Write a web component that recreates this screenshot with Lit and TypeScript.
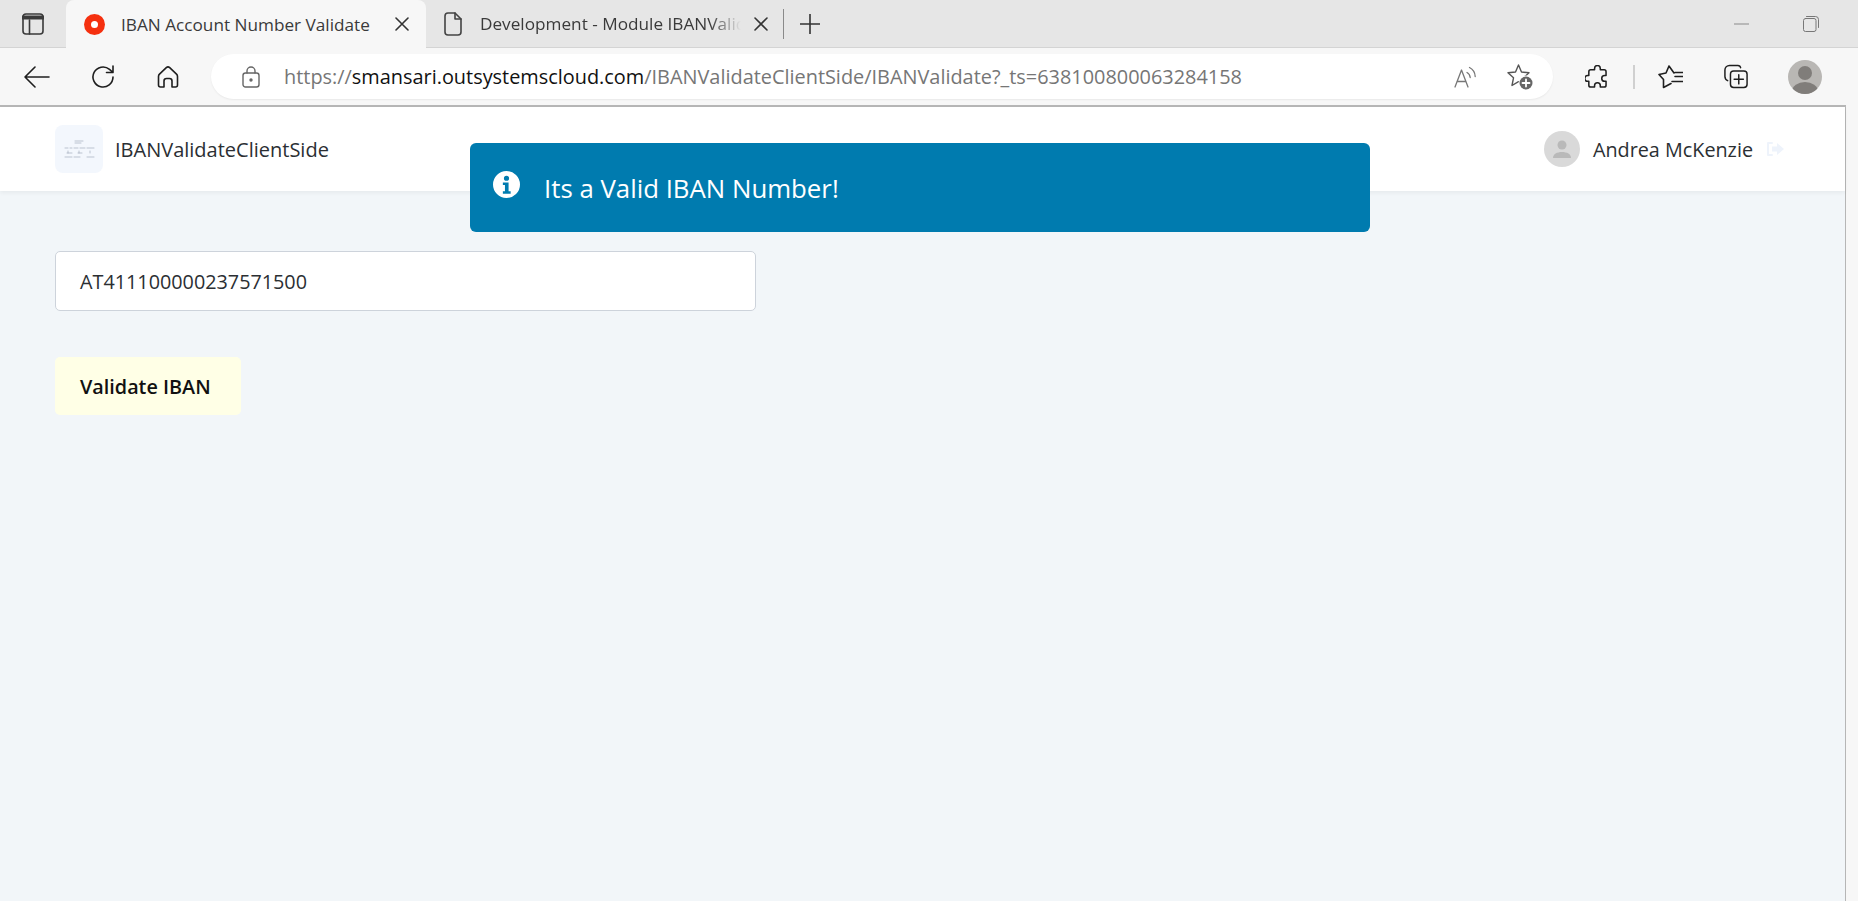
import { LitElement, html, css } from "lit";
import { customElement } from "lit/decorators.js";

@customElement("app-root")
export class AppRoot extends LitElement {
  static styles = css`
    :host { display: block; width: 1858px; height: 901px; position: relative; overflow: hidden; background: #f7f7f7; font-family: "Open Sans", "Noto Sans", sans-serif; color: #2b2f33; }
    svg { display: block; fill: none; stroke: #1f1f1f; stroke-width: 1.6; stroke-linecap: round; stroke-linejoin: round; flex: none; }
    .strip { height: 47px; background: #e6e6e6; border-bottom: 1px solid #d4d4d4; display: flex; align-items: flex-end; box-sizing: content-box; }
    .winbtn { width: 66px; height: 47px; display: flex; align-items: center; justify-content: center; }
    .tab { height: 47px; display: flex; align-items: center; font-size: 17.2px; box-sizing: border-box; color: #3a3a3a; white-space: nowrap; }
    .tab.active { width: 360px; background: #f7f7f7; border-radius: 8px 8px 0 0; padding: 0 0 0 18px; margin-bottom: -1px; height: 48px; }
    .favicon { width: 21px; height: 21px; border-radius: 50%; background: #f5300f; display: flex; align-items: center; justify-content: center; margin-right: 16px; flex: none; }
    .favicon i { width: 7px; height: 7px; background: #fff; border-radius: 50%; display: block; }
    .tab .title { width: 251px; overflow: hidden; }
    .tab.active .x { margin-left: 23px; }
    .tab.other { padding-left: 18px; }
    .tab.other .title { width: 261px; margin-left: 18px; -webkit-mask-image: linear-gradient(90deg, #000 88%, transparent 100%); mask-image: linear-gradient(90deg, #000 88%, transparent 100%); }
    .tab.other .x { margin-left: 13px; }
    .tabsep { width: 1px; height: 30px; background: #8a8a8a; align-self: center; margin-left: 15px; }
    .plus { margin-left: 16px; align-self: center; }
    .winctrls { margin-left: auto; display: flex; align-items: center; align-self: center; gap: 54px; padding-right: 39px; }
    .toolbar { height: 57px; background: #f7f7f7; display: flex; align-items: center; }
    .navbtn { display: flex; align-items: center; justify-content: center; flex: none; }
    .addr { width: 1342px; height: 45px; border-radius: 23px; background: #fff; box-shadow: 0 1px 2px rgba(0,0,0,.06); display: flex; align-items: center; flex: none; margin-left: 7px; box-sizing: border-box; padding-left: 31px; }
    .url { font-size: 19.9px; color: #767676; margin-left: 24px; white-space: nowrap; flex: 1; }
    .url b { font-weight: 400; color: #111; }
    .addr-actions { display: flex; align-items: center; gap: 30px; padding-right: 20px; }
    .tools { display: flex; align-items: center; margin-left: 32px; }
    .vsep { width: 2px; height: 24px; background: #d0d0d0; margin: 0 23px 0 26px; }
    .coll { margin-left: 41px; }
    .avatar { width: 34px; height: 34px; border-radius: 50%; background: #b9b7b4; overflow: hidden; margin-left: 40px; }
    .page { height: 796px; width: 1846px; background: #f2f6f9; border-top: 2px solid #b6b6b6; border-right: 1px solid #b6b6b6; box-sizing: border-box; }
    header { height: 84px; background: #fff; box-shadow: 0 2px 4px rgba(0,0,0,.05); display: flex; align-items: center; padding: 0 61px 0 55px; font-size: 20px; }
    .name { font-size: 19.8px; }
    .logo { width: 48px; height: 48px; border-radius: 8px; background: #f3f7fd; margin-right: 12px; display: flex; align-items: center; justify-content: center; }
    .logo svg { stroke: #a5acbb; stroke-width: .7; }
    .spacer { flex: 1; }
    .uav { width: 36px; height: 36px; border-radius: 50%; background: #d9d9d9; margin-right: 13px; display: flex; align-items: center; justify-content: center; }
    .logout { margin-left: 13px; }
    main { padding: 60px 0 0 55px; }
    .input { width: 701px; height: 60px; box-sizing: border-box; background: #fff; border: 1px solid #cdd3db; border-radius: 5px; display: flex; align-items: center; padding-left: 24px; font-size: 19.8px; color: #2b2f33; }
    .btn { margin-top: 46px; width: 186px; height: 58px; box-sizing: border-box; background: #ffffe6; border-radius: 5px; display: flex; align-items: center; padding-left: 25px; font-size: 19.8px; font-weight: 600; color: #111; }
    .toast { position: absolute; left: 470px; top: 143px; width: 900px; height: 89px; background: #007baf; border-radius: 6px; color: #fff; display: flex; align-items: center; padding-left: 23px; box-sizing: border-box; font-size: 25.8px; }
    .toast svg { stroke: none; margin-right: 24px; margin-top: -6px; }
  `;
  render() {
    return html`
      <div class="strip">
        <div class="winbtn"><svg width="22" height="22" viewBox="0 0 22 22" style="stroke:#3a3a3a"><rect x="1" y="1" width="20" height="20" rx="3"/><path d="M1 4.500h20" stroke-width="4"/><path d="M7.500 7v14"/></svg></div>
        <div class="tab active">
          <div class="favicon"><i></i></div>
          <div class="title">IBAN Account Number Validate</div>
          <svg class="x" width="14" height="14" viewBox="0 0 14 14" style="stroke:#333"><path d="M1 1l12 12M13 1L1 13"/></svg>
        </div>
        <div class="tab other">
          <svg width="18" height="24" viewBox="0 0 18 24" style="stroke:#444"><path d="M1 4a3 3 0 0 1 3-3h7l6 6v13a3 3 0 0 1-3 3H4a3 3 0 0 1-3-3z"/><path d="M11 1v6h6"/></svg>
          <div class="title">Development - Module IBANValidate</div>
          <svg class="x" width="14" height="14" viewBox="0 0 14 14" style="stroke:#333"><path d="M1 1l12 12M13 1L1 13"/></svg>
        </div>
        <div class="tabsep"></div>
        <svg class="plus" width="20" height="20" viewBox="0 0 20 20" style="stroke:#333"><path d="M10 0v20M0 10h20"/></svg>
        <div class="winctrls">
          <svg width="15" height="2" viewBox="0 0 15 2" style="stroke:#8a8a8a"><path d="M0 1h15" stroke-width="1"/></svg>
          <svg width="16" height="16" viewBox="0 0 16 16" style="stroke:#777;stroke-width:1"><rect x=".5" y="2.500" width="12.500" height="13" rx="2"/><path d="M3.500 .5h9a3 3 0 0 1 3 3v8"/></svg>
        </div>
      </div>
      <div class="toolbar">
        <div class="navbtn" style="width:74px"><svg width="26" height="22" viewBox="0 0 26 22"><path d="M25 11H1M11 1L1 11l10 10"/></svg></div>
        <div class="navbtn" style="width:58px"><svg width="26" height="26" viewBox="0 0 26 26"><path d="M23 13a10 10 0 1 1-3.500-7.600L23 8.500M23 2v6.500h-6.500"/></svg></div>
        <div class="navbtn" style="width:72px"><svg width="24" height="24" viewBox="0 0 24 24"><path d="M2.500 11.500c0-1 .4-1.800 1-2.400L10.300 2.700a2.500 2.500 0 0 1 3.400 0L20.500 9.100c.6.600 1 1.400 1 2.400V20a2 2 0 0 1-2 2h-3.500v-6a2.500 2.500 0 0 0-2.500-2.500h-3A2.500 2.500 0 0 0 8 16v6H4.500a2 2 0 0 1-2-2z"/></svg></div>
        <div class="addr">
          <svg width="18" height="22" viewBox="0 0 18 22" style="stroke:#666;stroke-width:1.400"><rect x="1" y="7" width="16" height="14" rx="2.500"/><path d="M5 7V5a4 4 0 0 1 8 0v2"/><circle cx="9" cy="14" r="1" fill="#666"/></svg>
          <div class="url">https://<b>smansari.outsystemscloud.com</b>/IBANValidateClientSide/IBANValidate?_ts=638100800063284158</div>
          <div class="addr-actions">
            <svg width="23" height="22" viewBox="0 0 23 22" style="stroke:#777;stroke-width:1.300"><path d="M1 21L7.500 4 14 21M3 15.500h9M13 6.500c1.800 1 3 3 3.200 5M15.500 1.500c3 1.500 5.500 5 5.700 9"/></svg>
            <svg width="26" height="26" viewBox="0 0 26 26" style="stroke:#555;stroke-width:1.400"><path d="M11.500 1l3 7 7.500 .8-5.500 5 1.500 7.700-6.500-3.800-6.500 3.800 1.500-7.700-5.500-5 7.500-.8z"/><circle cx="19" cy="19" r="7.500" fill="#fff" stroke="none"/><circle cx="19" cy="19" r="6.500" fill="#666" stroke="none"/><path d="M19 15.500v7M15.500 19h7" stroke="#fff" stroke-width="1.800"/></svg>
          </div>
        </div>
        <div class="tools">
          <svg width="22" height="24" viewBox="-1 0 23 25"><path d="M9 3.500a3 3 0 0 1 6 0V5h4a2 2 0 0 1 2 2v4h-1.500a3 3 0 0 0 0 6H21v4a2 2 0 0 1-2 2h-4v-1.500a3 3 0 0 0-6 0V23H5a2 2 0 0 1-2-2v-4H1.800a3 3 0 0 1 0-6H3V7a2 2 0 0 1 2-2h4z"/></svg>
          <div class="vsep"></div>
          <svg width="25" height="24" viewBox="0 0 25 24"><path d="M16 8L11 1 8 8 1 9.500 5.500 14.500 5.500 22.500 13 18.500M17 7.500h7.500M17 11.500h7.500M14 16.500h10.500"/></svg>
          <svg class="coll" width="24" height="25" viewBox="0 0 26 26"><path d="M18 3.500A3 3 0 0 0 15 1H6a5 5 0 0 0-5 5v7a5 5 0 0 0 3 4.500"/><rect x="7" y="7" width="18" height="18" rx="3.500"/><path d="M16 11v10M11 16h10"/></svg>
          <div class="avatar"><svg width="34" height="34" viewBox="0 0 34 34" style="stroke:none"><circle cx="17" cy="13" r="7" fill="#807d7a"/><ellipse cx="17" cy="31" rx="13" ry="9" fill="#807d7a"/></svg></div>
        </div>
      </div>
      <div class="page">
        <header>
          <div class="logo"><svg width="34" height="22" viewBox="0 0 34 22"><path d="M13 3h8M13 5h6M3 10h3M8 10h2M12 10h4M18 10h5M25 10h7M6 13v2M17 13v2M28 13v2M5 15h5M16 15h4M3 19h7M12 19h6M25 19h7"/></svg></div>
          <div>IBANValidateClientSide</div>
          <div class="spacer"></div>
          <div class="uav"><svg width="20" height="18" viewBox="0 0 20 18" style="stroke:none"><circle cx="10" cy="5" r="4.500" fill="#b9b9b9"/><path d="M1 18c0-4 4-6 9-6s9 2 9 6z" fill="#b9b9b9"/></svg></div>
          <div class="name">Andrea McKenzie</div>
          <svg class="logout" width="18" height="14" viewBox="0 0 18 14" style="stroke:none"><path d="M6 1H2v12h4" stroke="#eef3fb" stroke-width="2"/><path d="M6 4.500h5V1l7 6-7 6V9.500H6z" fill="#eef3fb"/></svg>
        </header>
        <main>
          <div class="input">AT411100000237571500</div>
          <div class="btn">Validate IBAN</div>
        </main>
      </div>
      <div class="toast">
        <svg width="27" height="27" viewBox="0 0 26 26"><path fill-rule="evenodd" fill="#fff" d="M13 0a13 13 0 1 0 0 26a13 13 0 0 0 0-26zM13 4.500a2.500 2.500 0 1 1 0 5a2.500 2.500 0 0 1 0-5zM9.500 11h5.500v8.500h2v2.500H9.500v-2.500h2V13.500h-2z"/></svg>
        <div>Its a Valid IBAN Number!</div>
      </div>
    `;
  }
}
